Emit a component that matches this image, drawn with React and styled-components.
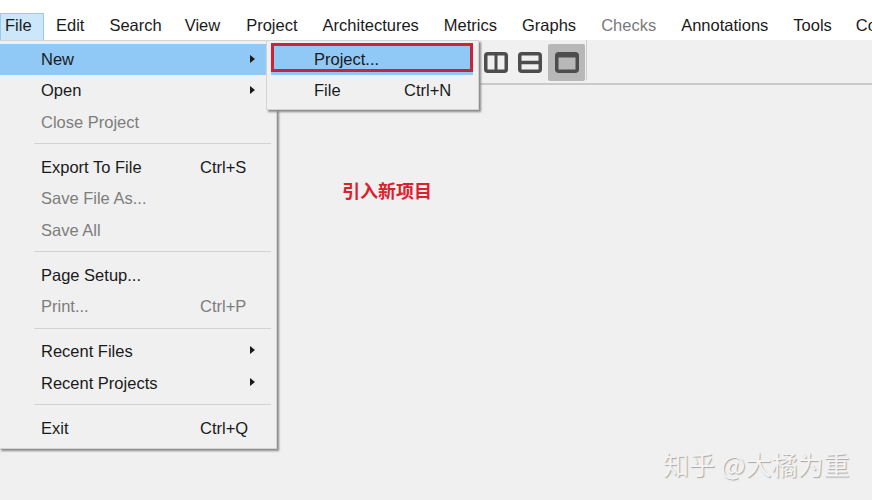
import React from "react";
import styled, { createGlobalStyle } from "styled-components";

const Global = createGlobalStyle`
  html, body { margin: 0; padding: 0; background: #f0f0f0; }
  body { font-family: "Liberation Sans", Arial, sans-serif; }
`;

const Page = styled.div`
  width: 872px; height: 500px; position: relative; overflow: hidden;
  display: flex; flex-direction: column; background: #f0f0f0; color: #1a1a1a;
`;
const MenuBar = styled.div`
  height: 40px; box-sizing: border-box; background: #fff; display: flex; align-items: flex-end;
  white-space: nowrap; overflow: hidden; flex: none;
`;
const MenuTitle = styled.div`
  box-sizing: border-box; height: 27px; line-height: 24px; font-size: 16.5px;
  margin-left: ${p => p.$left}px;
  flex: none;
  color: ${p => (p.$disabled ? "#7a7a7a" : "#1a1a1a")};
  ${p => p.$open && `
    width: 44px; margin-left: 0; background: #cce6fa;
    border: 1px solid #9ccbea; border-bottom: 0; padding-left: 4px; line-height: 23px;
  `}
`;
const Toolbar = styled.div`
  height: 45px; box-sizing: border-box; flex: none; border-bottom: 2px solid #c9c9c9;
  display: flex; align-items: flex-start; padding: 4px 0 0 484px;
`;
const ToolIcon = styled.div`
  width: ${p => (p.$active ? 37 : 24)}px; height: 37px; display: flex; align-items: center; justify-content: center;
  margin-left: ${p => p.$left}px; border-radius: 2px; background: ${p => (p.$active ? "#b8b8b8" : "transparent")};
`;
const ToolDivider = styled.div`
  width: 1px; height: 40px; margin: -4px 0 0 1px; background: #cfcfcf;
`;
const Canvas = styled.div`
  flex: 1; padding: 94px 0 0 342px;
`;
const Note = styled.div`
  font-size: 18px; line-height: 22px; font-weight: 700; color: #d8232f;
  font-family: "Noto Sans CJK SC", sans-serif;
`;
const Watermark = styled.div`
  position: absolute; left: 663px; top: 448px; font-size: 26px; line-height: 32px; white-space: nowrap;
  color: #f3f3f3; font-family: "Noto Sans CJK SC", sans-serif;
  text-shadow: 1px 1px 1px #a8a8a8;
`;
const Menu = styled.div`
  position: absolute; box-sizing: border-box; background: #f0f0f0;
  left: ${p => p.$x}px; top: ${p => p.$y}px; width: ${p => p.$w}px;
  padding: ${p => p.$pad};
  border: 1px solid #d4d4d4; box-shadow: 2px 2px 2px #8a8a8a;
  z-index: ${p => p.$z};
`;
const Row = styled.div`
  box-sizing: border-box; height: ${p => p.$h}px; display: flex; align-items: center;
  padding-left: ${p => p.$pl}px; font-size: 16.5px; position: relative; white-space: nowrap;
  color: ${p => (p.$disabled ? "#7d7d7d" : "#1a1a1a")};
  background: ${p => (p.$hot ? "#90c8f6" : "transparent")};
`;
const Shortcut = styled.span`
  position: absolute; left: ${p => p.$x}px;
`;
const Arrow = styled.span`
  position: absolute; left: 250px; top: 50%; margin-top: -5px; width: 0; height: 0;
  border-left: 5px solid #1a1a1a; border-top: 4px solid transparent; border-bottom: 4px solid transparent;
`;
const Separator = styled.div`
  height: 1px; margin: ${p => p.$top}px 5px ${p => p.$bottom}px 34px; background: #d2d2d2;
`;
const SubList = styled.div`
  margin: 0 5px 0 4px;
`;
const Highlight = styled.div`
  position: absolute; left: 4px; top: 2px; width: 202px; height: 29px; box-sizing: border-box;
  border: 3px solid #cf2236;
`;

const titles = [
  ["Edit", 12], ["Search", 25], ["View", 23], ["Project", 26], ["Architectures", 25],
  ["Metrics", 25], ["Graphs", 25], ["Checks", 25], ["Annotations", 25], ["Tools", 25], ["Co", 24],
];

const Panes = ({ kind }) => (
  <svg width="24" height="21" viewBox="0 0 24 21" fill="none" stroke="#4d4d4d">
    <rect x="1.75" y="1.75" width="20.5" height="17.5" rx="2" strokeWidth="3.5" />
    {kind === "v" && <path d="M12 2v17" strokeWidth="3" />}
    {kind === "h" && <path d="M2 10.5h20" strokeWidth="3.5" />}
    {kind === "full" && <path d="M2 4h20" strokeWidth="3" />}
  </svg>
);

const Item = ({ label, keys, sub, disabled, hot, h }) => (
  <Row $pl={41} $disabled={disabled} $hot={hot} $h={h}>
    {label}
    {keys && <Shortcut $x={200}>{keys}</Shortcut>}
    {sub && <Arrow />}
  </Row>
);

export default function App() {
  return (
    <Page>
      <Global />
      <MenuBar>
        <MenuTitle $open>File</MenuTitle>
        {titles.map(([t, l]) => (
          <MenuTitle key={t} $left={l} $disabled={t === "Checks"}>{t}</MenuTitle>
        ))}
      </MenuBar>
      <Toolbar>
        <ToolIcon $left={0}><Panes kind="v" /></ToolIcon>
        <ToolIcon $left={10}><Panes kind="h" /></ToolIcon>
        <ToolIcon $left={6} $active><Panes kind="full" /></ToolIcon>
        <ToolDivider />
      </Toolbar>
      <Canvas>
        <Note>引入新项目</Note>
      </Canvas>
      <Watermark>知乎 @大橘为重</Watermark>
      <Menu $x={-1} $y={40} $w={278} $pad="3px 0 4px 0" $z={1}>
        <Item label="New" sub hot h={31} />
        <Item label="Open" sub h={31} />
        <Item label="Close Project" disabled h={32} />
        <Separator $top={5} $bottom={7} />
        <Item label="Export To File" keys="Ctrl+S" h={32} />
        <Item label="Save File As..." disabled h={31} />
        <Item label="Save All" disabled h={32} />
        <Separator $top={5} $bottom={7} />
        <Item label="Page Setup..." h={32} />
        <Item label="Print..." keys="Ctrl+P" disabled h={31} />
        <Separator $top={6} $bottom={6} />
        <Item label="Recent Files" sub h={32} />
        <Item label="Recent Projects" sub h={32} />
        <Separator $top={5} $bottom={7} />
        <Item label="Exit" keys="Ctrl+Q" h={32} />
      </Menu>
      <Menu $x={266} $y={40} $w={213} $pad="3px 0 3px 0" $z={2}>
        <SubList>
          <Row $pl={43} $hot $h={31}>Project...</Row>
          <Row $pl={43} $h={31}>File<Shortcut $x={133}>Ctrl+N</Shortcut></Row>
        </SubList>
        <Highlight />
      </Menu>
    </Page>
  );
}
